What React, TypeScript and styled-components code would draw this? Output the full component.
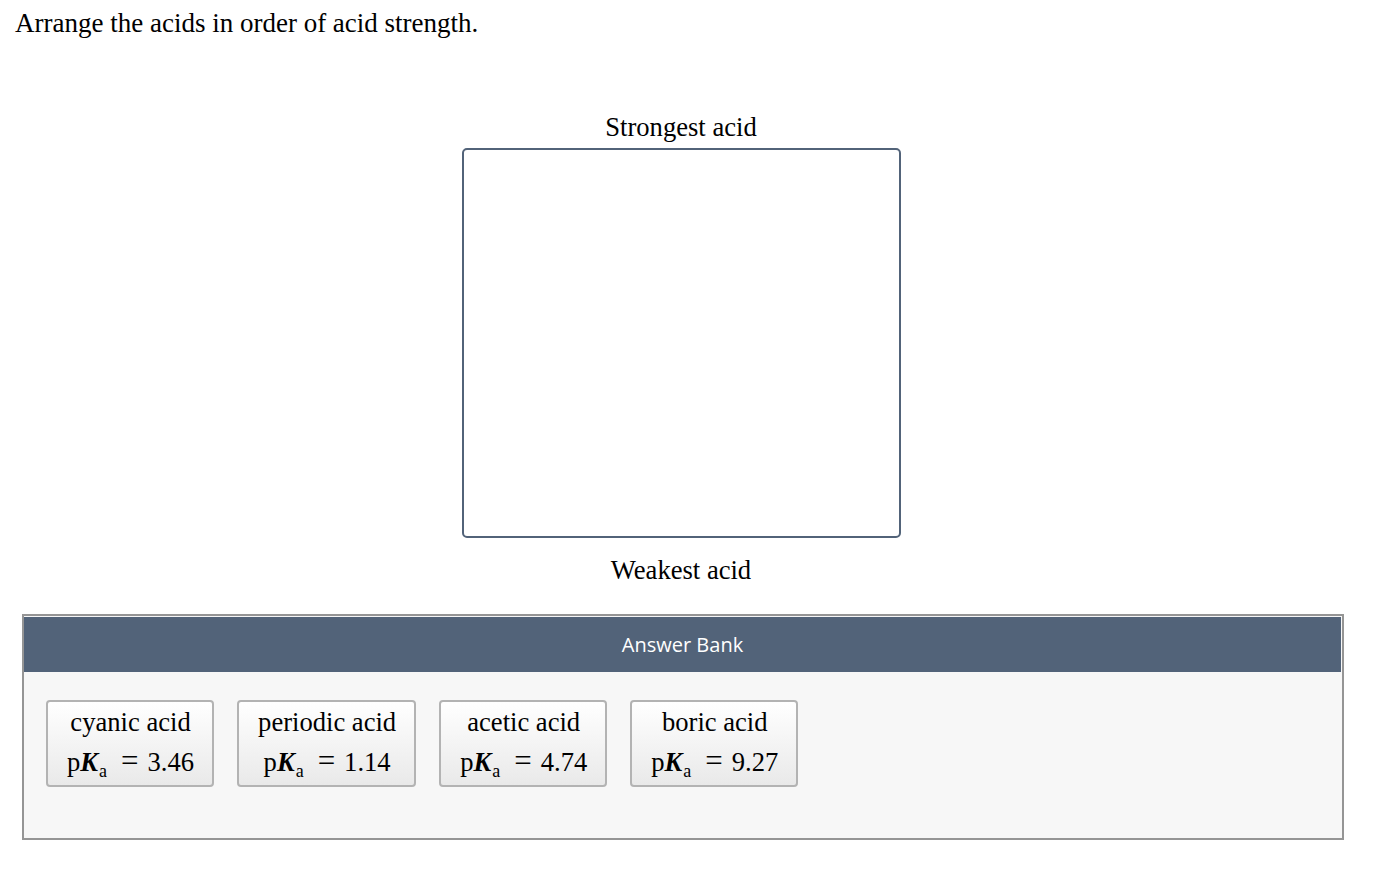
import React from 'react';
import styled, { createGlobalStyle } from 'styled-components';

interface Acid {
  name: string;
  pka: string;
}

const acids: Acid[] = [
  { name: 'cyanic acid', pka: '3.46' },
  { name: 'periodic acid', pka: '1.14' },
  { name: 'acetic acid', pka: '4.74' },
  { name: 'boric acid', pka: '9.27' }
];

const GlobalStyle = createGlobalStyle`
  body {
    margin: 0;
    background: #fff;
    color: #000;
    font-family: "Liberation Serif", "Times New Roman", serif;
  }
`;

const Page = styled.div`
  padding: 8px 34px 0 15px;
  display: flex;
  flex-direction: column;
`;

const Prompt = styled.div`
  font-size: 27px;
  line-height: 30px;
`;

const Ranking = styled.div`
  display: flex;
  flex-direction: column;
  align-items: center;
  margin-top: 74px;
  padding-left: 3px;
`;

const RankLabel = styled.div`
  font-size: 26.6px;
  line-height: 30px;
`;

const DropZone = styled.div`
  width: 435px;
  height: 386px;
  border: 2px solid #526379;
  border-radius: 5px;
  margin: 6px 0 17px;
`;

const Bank = styled.div`
  margin: 29px 0 0 7px;
  border: 2px solid #959595;
  background: #f7f7f7;
  height: 222px;
`;

const BankHeader = styled.div`
  margin: 1px 1px 0 0;
  height: 55px;
  background: #526379;
  color: #fff;
  font-family: "Open Sans", "Noto Sans", sans-serif;
  font-size: 20px;
  display: flex;
  align-items: center;
  justify-content: center;
`;

const ChipRow = styled.div`
  display: flex;
  gap: 23px;
  padding: 28px 22px;
`;

const Chip = styled.div`
  box-sizing: border-box;
  padding: 0 18px 0 19px;
  height: 87px;
  border: 2px solid #b3b3b3;
  border-radius: 4px;
  background: linear-gradient(#ffffff, #e9e9e9);
  display: flex;
  flex-direction: column;
  align-items: center;
  justify-content: center;
  font-size: 26.6px;
  line-height: 40px;
  white-space: nowrap;
`;

const Name = styled.div`
  margin-top: -3px;
`;

const Formula = styled.div`
  font-size: 26.6px;
`;

const K = styled.i`
  font-weight: bold;
`;

const Sub = styled.sub`
  font-size: 18px;
  vertical-align: -6px;
  line-height: 0;
  margin-left: 1px;
`;

const Eq = styled.span`
  font-size: 31px;
  line-height: 0;
  margin: 0 9px 0 14px;
`;

export default function App() {
  return (
    <>
      <GlobalStyle />
      <Page>
        <Prompt>Arrange the acids in order of acid strength.</Prompt>
        <Ranking>
          <RankLabel>Strongest acid</RankLabel>
          <DropZone />
          <RankLabel>Weakest acid</RankLabel>
        </Ranking>
        <Bank>
          <BankHeader>Answer Bank</BankHeader>
          <ChipRow>
            {acids.map(a => (
              <Chip key={a.name}>
                <Name>{a.name}</Name>
                <Formula>
                  p<K>K</K>
                  <Sub>a</Sub>
                  <Eq>=</Eq>
                  {a.pka}
                </Formula>
              </Chip>
            ))}
          </ChipRow>
        </Bank>
      </Page>
    </>
  );
}
